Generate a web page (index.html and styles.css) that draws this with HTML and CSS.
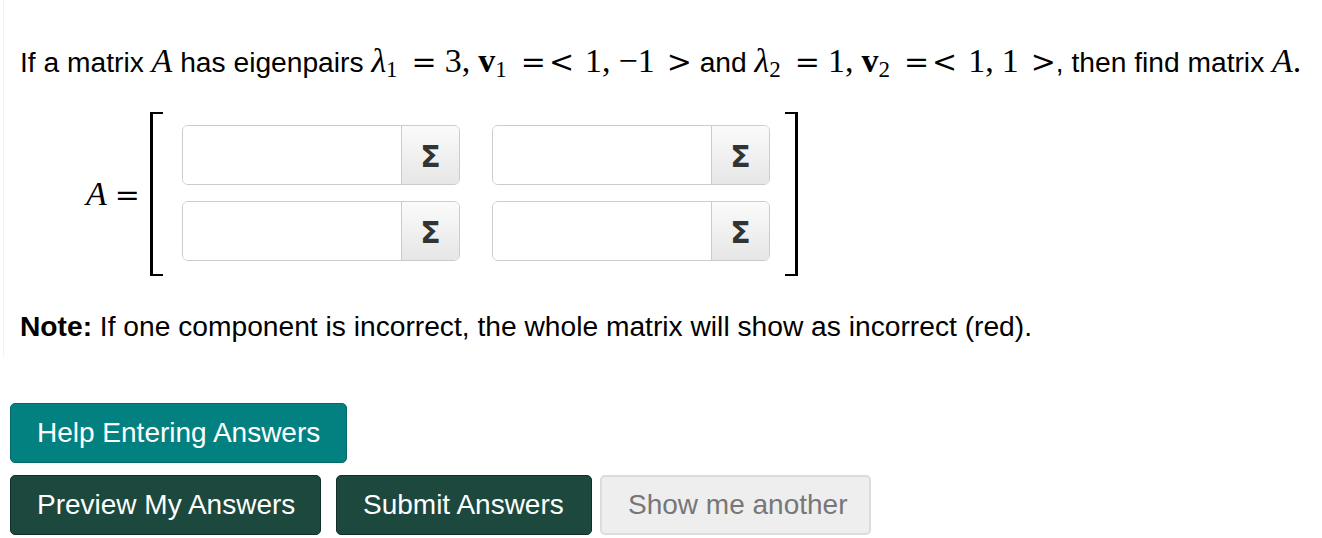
FILE: index.html
```html
<!DOCTYPE html>
<html>
<head>
<meta charset="utf-8">
<link rel="stylesheet" href="styles.css">
</head>
<body>
<div class="problem">
  <p class="question">If a matrix <span class="mi">A</span> has eigenpairs <span class="math"><span class="mi">λ</span><sub>1</sub><span class="mo">=</span>3<span class="punct">,</span><span class="vec">v</span><sub>1</sub><span class="mo eqlt">=</span><span class="mo lt">&lt;</span>1<span class="punct">,</span><span class="minus">−</span>1<span class="mo gt">&gt;</span></span> and <span class="math"><span class="mi">λ</span><sub>2</sub><span class="mo">=</span>1<span class="punct">,</span><span class="vec">v</span><sub>2</sub><span class="mo eqlt">=</span><span class="mo lt">&lt;</span>1<span class="punct">,</span>1<span class="mo gt">&gt;</span></span>, then find matrix <span class="mi">A</span><span class="math">.</span></p>

  <div class="matrix-row">
    <div class="label"><span class="mi">A</span><span class="eq">=</span></div>
    <div class="bracket left"></div>
    <div class="grid">
      <div class="field"><div class="input"></div><div class="sigma">Σ</div></div>
      <div class="field"><div class="input"></div><div class="sigma">Σ</div></div>
      <div class="field"><div class="input"></div><div class="sigma">Σ</div></div>
      <div class="field"><div class="input"></div><div class="sigma">Σ</div></div>
    </div>
    <div class="bracket right"></div>
  </div>

  <p class="note"><b>Note:</b> If one component is incorrect, the whole matrix will show as incorrect (red).</p>
</div>

<div class="actions">
  <div class="row"><span class="btn help">Help Entering Answers</span></div>
  <div class="row">
    <span class="btn dark preview">Preview My Answers</span>
    <span class="btn dark submit">Submit Answers</span>
    <span class="btn light">Show me another</span>
  </div>
</div>
</body>
</html>
```

FILE: styles.css
```css
* { box-sizing: border-box; }
html, body { margin: 0; padding: 0; background: #fff; }
body {
  font-family: "Liberation Sans", Arial, Helvetica, sans-serif;
  font-size: 28.2px;
  color: #000;
  width: 1322px;
  height: 538px;
  overflow: hidden;
}
.problem {
  margin-left: 3px;
  border-left: 1px solid #f3f3f3;
  padding: 43px 0 14px 16px;
}
.question {
  margin: 0;
  line-height: 36px;
  white-space: nowrap;
}
.mi {
  font-family: "Liberation Serif", "Times New Roman", serif;
  font-style: italic;
  font-size: 34px;
}
.math {
  font-family: "Liberation Serif", "Times New Roman", serif;
  font-size: 34px;
}
.math sub {
  font-size: 23px;
  vertical-align: -5px;
  line-height: 0;
}
.mo, .eq {
  font-family: "DejaVu Serif", serif;
  font-size: 30px;
}
.mo { margin: 0 8px 0 14px; }
.mo.eqlt { margin: 0 3px 0 14px; }
.mo.lt { margin: 0 11px 0 0; }
.mo.gt { margin: 0 0 0 12px; }
.minus { margin-right: 0; }
.punct { margin-right: 8px; }
.vec { font-weight: bold; }

.matrix-row {
  display: flex;
  align-items: center;
  margin-top: 32px;
  margin-left: 66px;
}
.label {
  display: flex;
  align-items: center;
  gap: 8px;
  margin-right: 10px;
  font-family: "Liberation Serif", "Times New Roman", serif;
  font-size: 34px;
}
.bracket {
  width: 13px;
  height: 164px;
  border-top: 2px solid #000;
  border-bottom: 2px solid #000;
}
.bracket.left { border-left: 3px solid #000; }
.bracket.right { border-right: 3px solid #000; margin-left: 15px; }
.grid {
  display: grid;
  grid-template-columns: 278px 278px;
  column-gap: 32px;
  row-gap: 16px;
  margin-left: 19px;
  margin-bottom: 2px;
}
.field {
  display: flex;
  height: 60px;
  border: 1px solid #cccccc;
  border-radius: 6px;
  overflow: hidden;
  box-shadow: inset 0 1px 1px rgba(0,0,0,0.04);
}
.input { flex: 1; background: #fff; }
.sigma {
  width: 58px;
  border-left: 1px solid #cccccc;
  background: linear-gradient(#fbfbfb, #e6e6e6);
  display: flex;
  align-items: center;
  justify-content: center;
  font-family: "DejaVu Sans", sans-serif;
  font-weight: bold;
  font-size: 30px;
  color: #333;
  padding-top: 2px;
}
.note {
  margin: 32px 0 0 0;
  line-height: 36px;
}

.actions {
  padding-left: 10px;
  margin-top: 45px;
  display: flex;
  flex-direction: column;
  gap: 12px;
}
.row { display: flex; }
.btn {
  display: inline-flex;
  align-items: center;
  height: 60px;
  padding: 0 25px 0 26px;
  border-radius: 5px;
  border: 1px solid transparent;
  font-size: 28px;
  color: #fff;
  white-space: nowrap;
}
.help {
  background: #038181;
  border-color: #036a6a;
  width: 337px;
}
.dark {
  background: #1c483e;
  border-color: #10302a;
}
.preview { width: 311px; }
.submit { width: 256px; margin-left: 15px; }
.light {
  background: #eeeeee;
  border: 2px solid #dcdcdc;
  color: #777;
  width: 271px;
  margin-left: 8px;
}
```
